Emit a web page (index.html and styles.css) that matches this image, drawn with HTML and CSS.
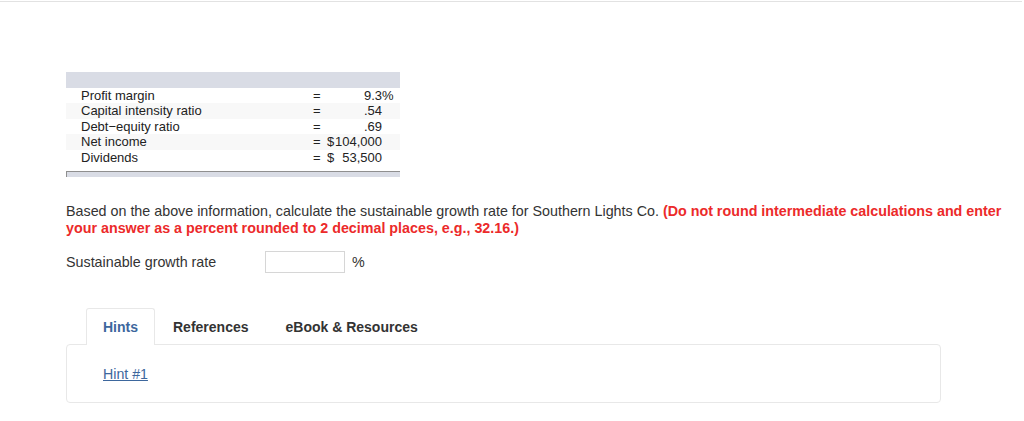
FILE: index.html
```html
<!DOCTYPE html>
<html>
<head>
<meta charset="utf-8">
<link rel="stylesheet" href="styles.css">
</head>
<body>
<div class="topline"></div>
<div class="page">
  <div class="datatable">
    <div class="dt-head"></div>
    <div class="dt-body">
      <div class="dt-row"><span class="lbl">Profit margin</span><span class="eq">=</span><span class="val"><span class="cur"></span><span class="num">9.3</span></span><span class="suf">%</span></div>
      <div class="dt-row alt"><span class="lbl">Capital intensity ratio</span><span class="eq">=</span><span class="val"><span class="cur"></span><span class="num">.54</span></span><span class="suf"></span></div>
      <div class="dt-row"><span class="lbl">Debt−equity ratio</span><span class="eq">=</span><span class="val"><span class="cur"></span><span class="num">.69</span></span><span class="suf"></span></div>
      <div class="dt-row alt"><span class="lbl">Net income</span><span class="eq">=</span><span class="val"><span class="cur">$</span><span class="num">104,000</span></span><span class="suf"></span></div>
      <div class="dt-row"><span class="lbl">Dividends</span><span class="eq">=</span><span class="val"><span class="cur">$</span><span class="num">53,500</span></span><span class="suf"></span></div>
    </div>
    <div class="dt-foot"></div>
  </div>

  <p class="question">Based on the above information, calculate the sustainable growth rate for Southern Lights Co. <strong class="warn">(Do not round intermediate calculations and enter your answer as a percent rounded to 2 decimal places, e.g., 32.16.)</strong></p>

  <div class="answer">
    <span class="answer-label">Sustainable growth rate</span>
    <input class="answer-input" type="text">
    <span class="answer-unit">%</span>
  </div>

  <div class="tabs">
    <div class="tab active">Hints</div>
    <div class="tab">References</div>
    <div class="tab">eBook &amp; Resources</div>
  </div>
  <div class="tab-panel">
    <a class="hint-link" href="#">Hint #1</a>
  </div>
</div>
</body>
</html>
```

FILE: styles.css
```css
* { box-sizing: border-box; }
body {
  margin: 0;
  background: #fff;
  font-family: "Liberation Sans", Arial, sans-serif;
  color: #333;
}
.topline {
  margin-top: 1px;
  margin-right: 2px;
  height: 1px;
  background: #e2e2e2;
}
.page {
  padding: 70px 14px 0 66px;
}
.datatable {
  width: 334px;
  font-size: 13px;
  color: #222;
}
.dt-head {
  height: 16px;
  background: #d9dce5;
}
.dt-body {
  padding: 0 0 6px 0;
}
.dt-row {
  display: flex;
  height: 15.4px;
  line-height: 15.4px;
  padding-left: 15px;
}
.dt-row.alt { background: #f8f8f8; }
.lbl { width: 232px; }
.eq { width: 14px; }
.val {
  width: 55px;
  display: flex;
  justify-content: space-between;
}
.suf { width: 13px; }
.dt-foot {
  height: 6px;
  background: #d9dce5;
  border-top: 1px solid #8f8f8f;
  border-left: 1px solid #8f8f8f;
}
.question {
  margin: 26px 0 0 0;
  font-size: 14.3px;
  line-height: 17px;
  color: #333;
}
.warn {
  color: #ec2a2a;
  font-weight: bold;
}
.answer {
  display: flex;
  align-items: center;
  margin-top: 14px;
  font-size: 14.3px;
}
.answer-label { width: 199px; }
.answer-input {
  width: 80px;
  height: 22px;
  border: 1px solid #d6d6d6;
  margin: 0;
  padding: 0;
}
.answer-unit { margin-left: 7px; }
.tabs {
  display: flex;
  margin-top: 35px;
  padding-left: 20px;
  font-size: 14px;
  font-weight: bold;
}
.tab {
  height: 36px;
  line-height: 36px;
  padding: 0 16px;
  margin-right: 1px;
  border: 1px solid transparent;
  border-bottom: none;
  color: #333;
}
.tab:last-child { margin-left: 2px; }
.tab.active {
  color: #3d679d;
  border-color: #e8e8e8;
  border-radius: 3px 3px 0 0;
  background: #fff;
  position: relative;
  z-index: 1;
  margin-bottom: -1px;
  height: 37px;
}
.tab-panel {
  width: 875px;
  height: 59px;
  border: 1px solid #e8e8e8;
  border-radius: 4px;
  padding: 21px 0 0 36px;
  font-size: 14.2px;
}
.hint-link {
  color: #3d679d;
  text-decoration: underline;
}
```
